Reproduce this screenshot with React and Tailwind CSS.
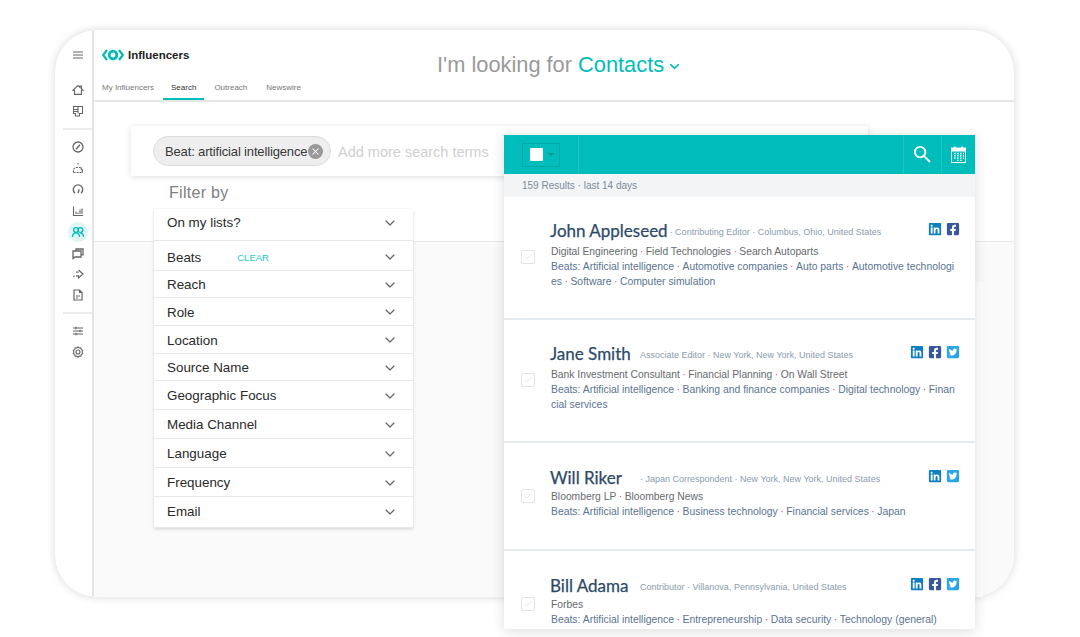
import { Fragment } from "react";
import { ChevronDown, X, Check } from "lucide-react";
import { FaLinkedin, FaFacebookSquare, FaTwitterSquare } from "react-icons/fa";
import { MdSearch } from "react-icons/md";

const tabs = ["My Influencers", "Search", "Outreach", "Newswire"];

const filters = [
  { label: "On my lists?", rowClass: "h-[32px] pb-[4px]" },
  { label: "Beats", clear: true, rowClass: "h-[30px] pt-[3px]" },
  { label: "Reach", rowClass: "h-[27px] pt-[1px]" },
  { label: "Role", rowClass: "h-[28px] pt-[1px]" },
  { label: "Location", rowClass: "h-[28px] pt-[1px]" },
  { label: "Source Name", rowClass: "h-[27px] pt-[1px]" },
  { label: "Geographic Focus", rowClass: "h-[29px] pt-[1px]" },
  { label: "Media Channel", rowClass: "h-[29px] pt-[1px]" },
  { label: "Language", rowClass: "h-[29px] pt-[1px]" },
  { label: "Frequency", rowClass: "h-[29px] pt-[1px]" },
  { label: "Email", rowClass: "h-[31px] pb-[1px]" },
];

const people = [
  {
    name: "John Appleseed",
    meta: "· Contributing Editor · Columbus, Ohio, United States",
    social: ["in", "fb"],
    org: ["Digital Engineering", "Field Technologies", "Search Autoparts"],
    beats: ["Beats: Artificial intelligence", "Automotive companies", "Auto parts", "Automotive technologies", "Software", "Computer simulation"],
    rowClass: "h-[123px] pt-[24px]",
    nameClass: "mb-[3px]",
  },
  {
    name: "Jane Smith",
    meta: "Associate Editor · New York, New York, United States",
    social: ["in", "fb", "tw"],
    org: ["Bank Investment Consultant", "Financial Planning", "On Wall Street"],
    beats: ["Beats: Artificial intelligence", "Banking and finance companies", "Digital technology", "Financial services"],
    rowClass: "h-[123px] pt-[24px]",
    nameClass: "mb-[3px]",
  },
  {
    name: "Will Riker",
    meta: "· Japan Correspondent · New York, New York, United States",
    social: ["in", "tw"],
    org: ["Bloomberg LP", "Bloomberg News"],
    beats: ["Beats: Artificial intelligence", "Business technology", "Financial services", "Japan"],
    rowClass: "h-[108px] pt-[25px]",
    nameClass: "mb-[1px]",
  },
  {
    name: "Bill Adama",
    meta: "Contributor · Villanova, Pennsylvania, United States",
    social: ["in", "fb", "tw"],
    org: ["Forbes"],
    beats: ["Beats: Artificial intelligence", "Entrepreneurship", "Data security", "Technology (general)"],
    rowClass: "h-[80px] pt-[25px]",
    nameClass: "mb-[1px]",
  },
];

const NavSvg = ({ children, className = "" }) => (
  <svg
    width="14"
    height="14"
    viewBox="0 0 14 14"
    fill="none"
    stroke="currentColor"
    strokeWidth="1.1"
    className={`text-[#666] shrink-0 ${className}`}
  >
    {children}
  </svg>
);

const navTop = [
  <path key="home" d="M2 7.2 7 2.6l2 1.8V3h1.4v2.7L12 7.2h-1.6v4.2H3.6V7.2z" />,
  <path key="panel" d="M2.5 2.5h9v7h-3v2.5h-4V9.5h-2zM7 2.5v7M3 5.5h4M3 7.5h4" />,
];

const navMiddle = [
  { id: "compass", d: <><circle cx="7" cy="7" r="5" strokeWidth="1.3" /><path d="M5 9.2 9 4.8" strokeWidth="1.5" /></> },
  { id: "inbox", d: <path d="M7 2v1.6M2.5 11.5V8.6L4.5 6M9.5 6l2 2.6v2.9zM2.5 11.5h9M5 6.5h4" strokeDasharray="2 1" /> },
  { id: "gauge", d: <><path d="M4 11.2A4.7 4.7 0 1 1 10 11.2" strokeWidth="1.4" /><path d="M7 11 8.2 7.6" strokeWidth="1.4" /></> },
  { id: "chart", d: <path d="M2.5 2.5v9h9.5M5 10V7.5M7 10V8.5M9 10V5.5M11 10V4.5" />, className: "mt-[1px]" },
  { id: "users" },
  { id: "copy", d: <path d="M5 4.8V3h7v5.8h-2M2 5h8v6H4l-2 1.4z" strokeWidth="1.3" /> },
  { id: "share", d: <path d="M7.5 3 12 7l-4.5 4V8.8H5M7.5 5.2H5M2.5 9.8l1-1.2" strokeWidth="1.2" /> },
  { id: "file", d: <path d="M3 2h5.5L11 4.5V12H3zM8.5 2v2.5H11M5 8h4M5 10h2" strokeWidth="1.2" /> },
];

const navBottom = [
  <path key="sliders" d="M2 4h10M2 7h10M2 10h10M5 2.8v2.4M9 5.8v2.4M5 8.8v2.4" strokeWidth="1.2" />,
  <Fragment key="gear">
    <circle cx="7" cy="7" r="2" />
    <path d="M7 1.8 8.2 3l1.7-.2.3 1.7 1.5.9-.7 1.6.7 1.6-1.5.9-.3 1.7-1.7-.2L7 12.2 5.8 11l-1.7.2-.3-1.7-1.5-.9.7-1.6-.7-1.6 1.5-.9.3-1.7 1.7.2z" />
  </Fragment>,
];

const Logo = () => (
  <svg width="22" height="12" viewBox="0 0 22 12" fill="none" stroke="#00bdbb" strokeWidth="2.2">
    <path d="M5 1 1.2 6 5 11" />
    <path d="M17 1 20.8 6 17 11" />
    <circle cx="11" cy="6" r="3.8" strokeWidth="2.8" />
  </svg>
);

const CalendarIcon = () => (
  <svg width="15" height="17" viewBox="0 0 15 17" fill="none">
    <rect x="0.5" y="2" width="14" height="14.5" fill="none" stroke="#fff" />
    <rect x="0.5" y="2" width="14" height="3.5" fill="#fff" />
    <rect x="3" y="0.5" width="1.5" height="2" fill="#fff" />
    <rect x="10.5" y="0.5" width="1.5" height="2" fill="#fff" />
    <path
      d="M3 7.5h1.6M6 7.5h1.6M9 7.5h1.6M12 7.5h1M3 9.8h1.6M6 9.8h1.6M9 9.8h1.6M12 9.8h1M3 12.1h1.6M6 12.1h1.6M9 12.1h1.6M12 12.1h1M6 14.4h1.6M9 14.4h1.6"
      stroke="#fff"
      strokeWidth="1.4"
    />
  </svg>
);

const Dotted = ({ items }) =>
  items.map((item, i) => (
    <Fragment key={item}>
      {i > 0 && <span className="text-[#e8326f] mx-[-0.4px]"> · </span>}
      {item}
    </Fragment>
  ));

const SocialIcon = ({ type }) => {
  if (type === "in") return <FaLinkedin className="w-[14px] h-[14px] text-[#0f7fbd]" />;
  if (type === "fb") return <FaFacebookSquare className="w-[14px] h-[14px] text-[#36589b]" />;
  return <FaTwitterSquare className="w-[14px] h-[14px] text-[#2aa6e8]" />;
};

const PersonRow = ({ person }) => (
  <div className={`${person.rowClass} shrink-0 border-b-2 border-[#e6ebef] pl-[17px] pr-[15px]`}>
    <div className="flex items-center">
      <div className="w-[14px] h-[14px] mt-[4px] shrink-0 rounded-[2px] border border-[#e4e4e4] flex items-center justify-center mr-[15px]">
        <Check className="w-[10px] h-[10px] text-[#e4e4e4]" strokeWidth={2} />
      </div>
      <div className="flex-1 min-w-0">
        <div className={`flex items-center h-[20px] ${person.nameClass}`}>
          <span className="min-w-[88px] text-[17px] leading-[20px] text-[#2c4a68] font-['Lato',sans-serif] [-webkit-text-stroke:0.25px_#2c4a68] mr-[2px]">
            {person.name}
          </span>
          <span className="text-[9px] text-[#8b9bad] mt-[3px]">{person.meta}</span>
          <div className="ml-auto self-start mt-[1px] flex gap-[4px]">
            {person.social.map((s) => (
              <SocialIcon key={s} type={s} />
            ))}
          </div>
        </div>
        <p className="pl-[1px] text-[10.3px] leading-[15px] text-[#666a6e]">
          <Dotted items={person.org} />
        </p>
        <p className="pl-[1px] pr-[3px] text-[10.4px] leading-[15px] text-[#5a7491] break-all">
          <Dotted items={person.beats} />
        </p>
      </div>
    </div>
  </div>
);

const ResultsPanel = () => (
  <div className="absolute left-[504px] top-[135px] w-[471px] h-[494px] bg-white shadow-[0_2px_12px_rgba(0,0,0,0.14)] flex flex-col overflow-hidden">
    <div className="h-[39px] shrink-0 bg-[#00bdbb] flex items-center">
      <div className="w-[75px] h-full flex items-center pl-[18px] border-r border-[#1cc6c4]">
        <div className="w-[38px] h-[24px] border border-[#00a8a6] flex items-center pl-[7px] gap-[5px]">
          <div className="w-[13px] h-[13px] bg-white rounded-[1px]" />
          <div className="w-0 h-0 border-x-[3px] border-x-transparent border-t-[3px] border-t-[#0a8f8d]" />
        </div>
      </div>
      <div className="ml-auto w-[38px] h-full flex items-center justify-center border-l border-[#1cc6c4]">
        <MdSearch className="w-[23px] h-[23px] text-white" />
      </div>
      <div className="w-[34px] h-full flex items-center justify-center border-l border-[#1cc6c4]">
        <CalendarIcon />
      </div>
    </div>
    <div className="h-[23px] shrink-0 bg-[#f2f4f6] pl-[18px] flex items-center text-[10px] text-[#7d8c9c]">
      159 Results · last 14 days
    </div>
    {people.map((p) => (
      <PersonRow key={p.name} person={p} />
    ))}
  </div>
);

export default function App() {
  return (
    <div className="relative w-[1080px] h-[637px] bg-white overflow-hidden font-['Liberation_Sans',Arial,sans-serif] pl-[55px] pt-[30px]">
      <div className="w-[959px] h-[567px] flex rounded-[42px] overflow-hidden bg-white shadow-[0_0_8px_rgba(0,0,0,0.16)]">
        <aside className="w-[39px] shrink-0 border-r-2 border-[#e4e4e4] flex flex-col items-center pt-[19px] pl-[8px]">
          <svg width="12" height="12" viewBox="0 0 12 12" stroke="#666" strokeWidth="1.2" className="shrink-0">
            <path d="M1 3h10M1 6h10M1 9h10" />
          </svg>
          <div className="flex flex-col items-center gap-[7px] mt-[22px]">
            {navTop.map((icon) => (
              <NavSvg key={icon.key}>{icon}</NavSvg>
            ))}
          </div>
          <div className="w-full h-[2px] bg-[#ececec] my-[10px]" />
          <div className="flex flex-col items-center gap-[7px]">
            {navMiddle.map((item) =>
              item.id === "users" ? (
                <div key={item.id} className="w-[20px] h-[20px] rounded-full bg-[#dff6f5] flex items-center justify-center -my-[3px]">
                  <svg width="14" height="14" viewBox="0 0 14 14" fill="none" stroke="#00bdbb" strokeWidth="1.3">
                    <circle cx="5" cy="5" r="2.4" />
                    <circle cx="9.4" cy="5" r="2.4" />
                    <path d="M1.5 12c0-3 1.5-4.2 3.5-4.2S8.5 9 8.5 12M9 7.8c2 0 3.5 1.2 3.5 4.2" />
                  </svg>
                </div>
              ) : (
                <NavSvg key={item.id} className={item.className}>
                  {item.d}
                </NavSvg>
              )
            )}
          </div>
          <div className="w-full h-[2px] bg-[#ececec] my-[10px]" />
          <div className="flex flex-col items-center gap-[7px]">
            {navBottom.map((icon) => (
              <NavSvg key={icon.key}>{icon}</NavSvg>
            ))}
          </div>
        </aside>

        <main className="flex-1 min-w-0 flex flex-col">
          <header className="relative h-[72px] shrink-0 border-b-2 border-[#e6e6e6] pl-[8px]">
            <div className="flex items-center gap-[4px] pt-[19px]">
              <Logo />
              <span className="text-[11.5px] font-bold text-[#222] leading-[12px]">Influencers</span>
            </div>
            <nav className="flex mt-[12px] gap-[9px] text-[8px] text-[#777]">
              {tabs.map((t) => (
                <span
                  key={t}
                  className={`h-[27px] pt-[10px] leading-[10px] ${
                    t === "Search" ? "border-b-2 border-[#00bdbb] text-[#333] px-[8px] mr-[1px]" : t === "Outreach" ? "mr-[10px]" : ""
                  }`}
                >
                  {t}
                </span>
              ))}
            </nav>
            <h1 className="absolute left-[343px] top-[20px] text-[21.8px] leading-[30px] text-[#9a9a9a] flex items-center whitespace-nowrap">
              I'm looking for&nbsp;
              <span className="text-[#00bdbb]">Contacts</span>
              <ChevronDown className="w-[15px] h-[15px] text-[#00bdbb] ml-[3px] mt-[3px]" strokeWidth={2.4} />
            </h1>
          </header>

          <section className="flex-1 bg-[linear-gradient(to_bottom,#ffffff_139px,#e8e8e8_139px,#e8e8e8_140px,#fafafa_140px)]">
            <div className="ml-[37px] mt-[24px] w-[737px] h-[50px] bg-white shadow-[0_1px_6px_rgba(0,0,0,0.14)] flex items-center pl-[22px]">
              <div className="w-[178px] h-[30px] rounded-full bg-[#eeeeee] border border-[#dcdcdc] flex items-center pl-[11px]">
                <span className="mt-[1px] text-[13px] tracking-[-0.15px] text-[#3a3a3a] whitespace-nowrap">Beat: artificial intelligence</span>
                <span className="w-[15px] h-[15px] ml-[1px] rounded-full bg-[#999] flex items-center justify-center">
                  <X className="w-[11px] h-[11px] text-white" strokeWidth={2.2} />
                </span>
              </div>
              <span className="ml-[7px] mt-[3px] text-[14.5px] text-[#cfcfcf]">Add more search terms</span>
            </div>
            <div className="ml-[75px] mt-[8px] text-[16px] leading-[18px] tracking-[0.3px] text-[#808080]">Filter by</div>
            <div className="ml-[60px] mt-[7px] w-[259px] bg-white shadow-[0_1px_3px_rgba(0,0,0,0.16)]">
              {filters.map((f) => (
                <div
                  key={f.label}
                  className={`${f.rowClass} border-b border-[#e8e8e8] flex items-center pl-[13px] pr-[15px] text-[13.4px] text-[#2a2a2a]`}
                >
                  <span className="mt-[2px]">{f.label}</span>
                  {f.clear && <span className="ml-[36px] mt-[2px] text-[9.5px] text-[#1cc8c6]">CLEAR</span>}
                  <ChevronDown className="ml-auto w-[16px] h-[16px] text-[#666]" strokeWidth={1.8} />
                </div>
              ))}
            </div>
          </section>
        </main>
      </div>
      <div className="absolute left-[975px] top-[282px] w-[8px] h-[315px] bg-white" />
      <ResultsPanel />
    </div>
  );
}
